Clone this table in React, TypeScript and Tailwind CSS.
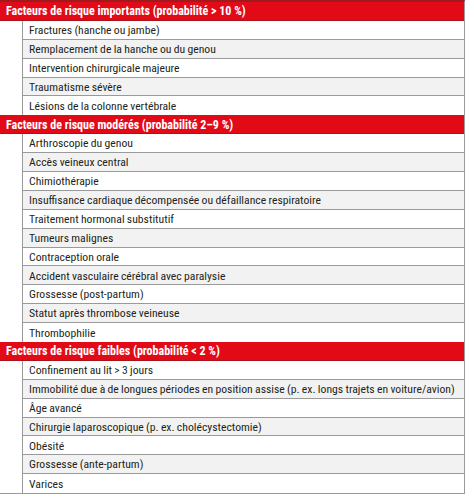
const sections = [
  {
    title: "Facteurs de risque importants (probabilité > 10 %)",
    items: [
      "Fractures (hanche ou jambe)",
      "Remplacement de la hanche ou du genou",
      "Intervention chirurgicale majeure",
      "Traumatisme sévère",
      "Lésions de la colonne vertébrale",
    ],
  },
  {
    title: "Facteurs de risque modérés (probabilité 2–9 %)",
    items: [
      "Arthroscopie du genou",
      "Accès veineux central",
      "Chimiothérapie",
      "Insuffisance cardiaque décompensée ou défaillance respiratoire",
      "Traitement hormonal substitutif",
      "Tumeurs malignes",
      "Contraception orale",
      "Accident vasculaire cérébral avec paralysie",
      "Grossesse (post-partum)",
      "Statut après thrombose veineuse",
      "Thrombophilie",
    ],
  },
  {
    title: "Facteurs de risque faibles (probabilité < 2 %)",
    items: [
      "Confinement au lit > 3 jours",
      "Immobilité due à de longues périodes en position assise (p. ex. longs trajets en voiture/avion)",
      "Âge avancé",
      "Chirurgie laparoscopique (p. ex. cholécystectomie)",
      "Obésité",
      "Grossesse (ante-partum)",
      "Varices",
    ],
  },
];

export default function App() {
  return (
    <div className="w-[474px] h-[501px] bg-white text-[11.7px] text-[#231f20] font-['Roboto_Condensed','DejaVu_Sans_Condensed',sans-serif]">
      <div className="w-[465px] border-t-2 border-t-[#9b1b1f] border-r border-r-[#9a9a9a] border-b border-b-[#9a9a9a]">
        {sections.map((section) => (
          <div key={section.title}>
            <div className="h-[18.9px] flex items-center pt-[1px] px-[6px] bg-[#e20a17] border-b border-b-[#a8141c] text-white font-bold text-[12px] leading-none whitespace-nowrap">
              {section.title}
            </div>
            <div className="flex">
              <div className="w-[23px] shrink-0 border-r border-r-[#9a9a9a]" />
              <div className="flex-1 min-w-0">
                {section.items.map((item, i) => (
                  <div
                    key={item}
                    className={`h-[18.9px] flex items-center pt-[2px] pl-[6px] leading-none whitespace-nowrap [word-spacing:-0.4px] ${
                      i < section.items.length - 1 ? "border-b border-b-[#9a9a9a]" : ""
                    } ${i % 2 === 1 ? "bg-[#f2f2f2]" : "bg-white"}`}
                  >
                    {item}
                  </div>
                ))}
              </div>
            </div>
          </div>
        ))}
      </div>
    </div>
  );
}
